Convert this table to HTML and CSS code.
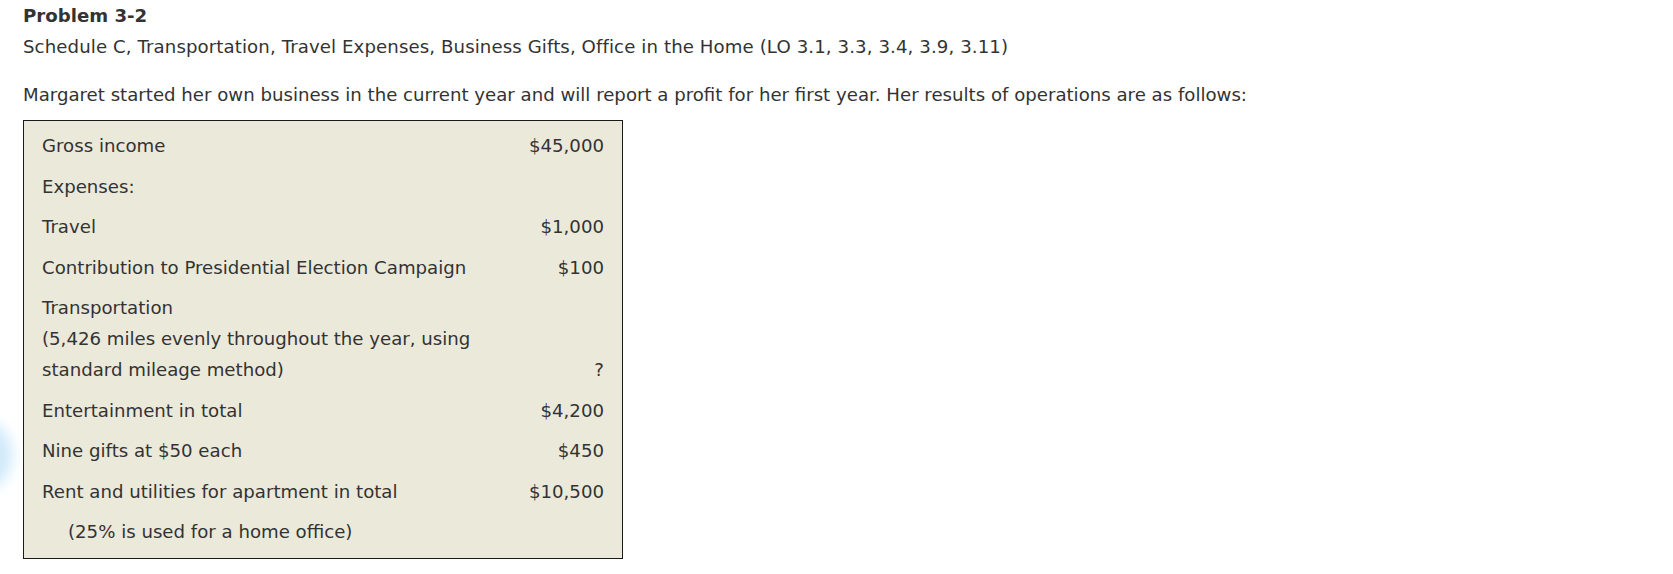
FILE: index.html
```html
<!DOCTYPE html>
<html>
<head>
<meta charset="utf-8">
<link rel="stylesheet" href="styles.css">
</head>
<body>
<div class="page">
  <div class="title">Problem 3-2</div>
  <div class="subtitle">Schedule C, Transportation, Travel Expenses, Business Gifts, Office in the Home (LO 3.1, 3.3, 3.4, 3.9, 3.11)</div>
  <p class="intro">Margaret started her own business in the current year and will report a profit for her first year. Her results of operations are as follows:</p>
  <div class="box">
    <table class="ops">
      <tr><td class="label">Gross income</td><td class="amt">$45,000</td></tr>
      <tr><td class="label">Expenses:</td><td class="amt"></td></tr>
      <tr><td class="label">Travel</td><td class="amt">$1,000</td></tr>
      <tr><td class="label">Contribution to Presidential Election Campaign</td><td class="amt">$100</td></tr>
      <tr><td class="label">Transportation<br>(5,426 miles evenly throughout the year, using<br>standard mileage method)</td><td class="amt bottom">?</td></tr>
      <tr><td class="label">Entertainment in total</td><td class="amt">$4,200</td></tr>
      <tr><td class="label">Nine gifts at $50 each</td><td class="amt">$450</td></tr>
      <tr><td class="label">Rent and utilities for apartment in total</td><td class="amt">$10,500</td></tr>
      <tr><td class="label indent">(25% is used for a home office)</td><td class="amt"></td></tr>
    </table>
  </div>
</div>
<div class="glow"></div>
</body>
</html>
```

FILE: styles.css
```css
html, body {
  margin: 0;
  padding: 0;
  background: #ffffff;
}
body {
  font-family: "DejaVu Sans", Verdana, sans-serif;
  font-size: 18.15px;
  color: #333333;
}
.page {
  padding-left: 23px;
}
.title {
  font-weight: bold;
  line-height: 31px;
}
.subtitle {
  line-height: 31px;
  letter-spacing: 0.1px;
}
.intro {
  margin: 16.5px 0 10px 0;
  line-height: 31px;
}
.box {
  width: 598px;
  border: 1px solid #1a1a1a;
  background: #ebe9da;
  padding: 5px 0 6px 0;
}
.ops {
  width: 100%;
  border-collapse: collapse;
}
.ops td {
  padding: 4.75px 18px 4.75px 18px;
  line-height: 31px;
  vertical-align: top;
}
.ops td.amt {
  text-align: right;
  white-space: nowrap;
}
.ops td.bottom {
  vertical-align: bottom;
}
.ops td.indent {
  padding-left: 44px;
}
.glow {
  position: fixed;
  left: -38px;
  top: 422px;
  width: 50px;
  height: 66px;
  border-radius: 50%;
  background: #cfe9fb;
  filter: blur(7px);
}
```
